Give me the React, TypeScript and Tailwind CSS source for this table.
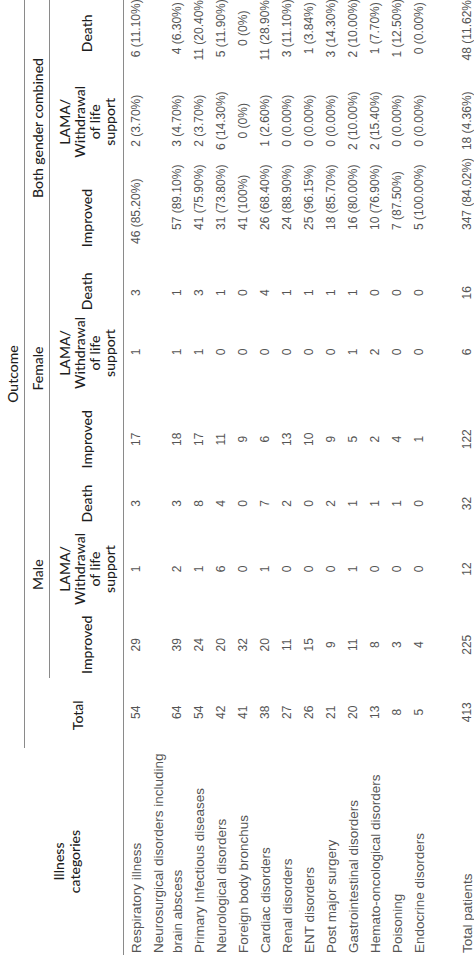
const rows: { label: string[]; values: string[] }[] = [
  { label: ["Respiratory illness"], values: ["54", "29", "1", "3", "17", "1", "3", "46 (85.20%)", "2 (3.70%)", "6 (11.10%)"] },
  { label: ["Neurosurgical disorders including", "brain abscess"], values: ["64", "39", "2", "3", "18", "1", "1", "57 (89.10%)", "3 (4.70%)", "4 (6.30%)"] },
  { label: ["Primary Infectious diseases"], values: ["54", "24", "1", "8", "17", "1", "3", "41 (75.90%)", "2 (3.70%)", "11 (20.40%)"] },
  { label: ["Neurological disorders"], values: ["42", "20", "6", "4", "11", "0", "1", "31 (73.80%)", "6 (14.30%)", "5 (11.90%)"] },
  { label: ["Foreign body bronchus"], values: ["41", "32", "0", "0", "9", "0", "0", "41 (100%)", "0 (0%)", "0 (0%)"] },
  { label: ["Cardiac disorders"], values: ["38", "20", "1", "7", "6", "0", "4", "26 (68.40%)", "1 (2.60%)", "11 (28.90%)"] },
  { label: ["Renal disorders"], values: ["27", "11", "0", "2", "13", "0", "1", "24 (88.90%)", "0 (0.00%)", "3 (11.10%)"] },
  { label: ["ENT disorders"], values: ["26", "15", "0", "0", "10", "0", "1", "25 (96.15%)", "0 (0.00%)", "1 (3.84%)"] },
  { label: ["Post major surgery"], values: ["21", "9", "0", "2", "9", "0", "1", "18 (85.70%)", "0 (0.00%)", "3 (14.30%)"] },
  { label: ["Gastrointestinal disorders"], values: ["20", "11", "1", "1", "5", "1", "1", "16 (80.00%)", "2 (10.00%)", "2 (10.00%)"] },
  { label: ["Hemato-oncological disorders"], values: ["13", "8", "0", "1", "2", "2", "0", "10 (76.90%)", "2 (15.40%)", "1 (7.70%)"] },
  { label: ["Poisoning"], values: ["8", "3", "0", "1", "4", "0", "0", "7 (87.50%)", "0 (0.00%)", "1 (12.50%)"] },
  { label: ["Endocrine disorders"], values: ["5", "4", "0", "0", "1", "0", "0", "5 (100.00%)", "0 (0.00%)", "0 (0.00%)"] },
];

const totals = ["413", "225", "12", "32", "122", "6", "16", "347 (84.02%)", "18 (4.36%)", "48 (11.62%)"];

// per-column nudges so each column sits where the scan has it
const colPad = [
  "justify-center pl-[2px]",
  "justify-center pr-[4px]",
  "justify-center pl-[5px]",
  "justify-center",
  "justify-center pr-[12px]",
  "justify-center pl-[14px]",
  "justify-center pr-[7px]",
  "justify-start pl-[26px]",
  "justify-center pl-[6px]",
  "justify-center pl-[20px]",
];

const grid =
  "grid grid-cols-[207px_69.5px_71.5px_71px_65px_75.5px_73px_66.5px_85px_94.5px_76.5px]";

const Lama = () => (
  <span className="block leading-[15px] whitespace-nowrap text-center">
    LAMA/
    <br />
    Withdrawal
    <br />
    of life
    <br />
    support
  </span>
);

const DataRow = ({ label, values, first }: { label: string[]; values: string[]; first?: boolean }) => (
  <div className={`${grid} items-end text-[#555] py-[1.5px]`}>
    <div className="pl-[2px] whitespace-nowrap text-[13.5px] leading-[19px]">
      {label.map((l) => (
        <div key={l}>{l}</div>
      ))}
    </div>
    {values.map((v, i) => (
      <div
        key={i}
        className={`flex whitespace-nowrap text-[12px] leading-[19px] ${
          first && i === 7 ? "justify-start pl-[12px]" : colPad[i]
        }`}
      >
        {v}
      </div>
    ))}
  </div>
);

export default function App() {
  const head = "font-['Lato',sans-serif] font-medium text-[14px] text-[#1e1e1e]";
  const cell = "flex justify-center whitespace-nowrap";
  return (
    <div className="w-[474px] h-[955px] overflow-hidden bg-white">
      <div className="w-[955px] h-[474px] origin-top-left -rotate-90 translate-y-[955px] font-['Liberation_Sans',Arial,sans-serif]">
        {/* header */}
        <div className={`${grid} ${head}`}>
          <div className="col-start-2 col-span-10 h-[25px] border-b border-[#8a8a8a] flex items-center justify-center">
            Outcome
          </div>
          <div className="col-start-3 col-span-3 row-start-2 h-[25px] border-b border-[#8a8a8a] flex items-center justify-center">
            Male
          </div>
          <div className="col-start-6 col-span-3 row-start-2 h-[25px] border-b border-[#8a8a8a] flex items-center justify-center pr-[10px]">
            Female
          </div>
          <div className="col-start-9 col-span-3 row-start-2 h-[25px] border-b border-[#8a8a8a] flex items-center justify-center">
            Both gender combined
          </div>
        </div>
        <div className={`${grid} ${head} h-[74px] border-b border-[#8a8a8a] items-center`}>
          <div className="self-start pt-[1px] leading-[16px] pr-[20px] text-center">
            Illness
            <br />
            categories
          </div>
          <div className={`${cell} self-start pt-[17px] pr-[4px]`}>Total</div>
          <div className={`${cell} pr-[4px]`}>Improved</div>
          <div className={`${cell} pl-[5px]`}>
            <Lama />
          </div>
          <div className={cell}>Death</div>
          <div className={`${cell} pr-[12px]`}>Improved</div>
          <div className={`${cell} pl-[12px]`}>
            <Lama />
          </div>
          <div className={`${cell} pr-[4px]`}>Death</div>
          <div className={`${cell} pr-[9px]`}>Improved</div>
          <div className={`${cell} pl-[4px]`}>
            <Lama />
          </div>
          <div className={`${cell} pl-[10px]`}>Death</div>
        </div>

        {/* body */}
        <div className="pt-[1px]">
          {rows.map((r, i) => (
            <DataRow key={r.label[0]} label={r.label} values={r.values} first={i === 0} />
          ))}
          <div className="h-[26px]" />
          <DataRow label={["Total patients"]} values={totals} />
        </div>
      </div>
    </div>
  );
}
